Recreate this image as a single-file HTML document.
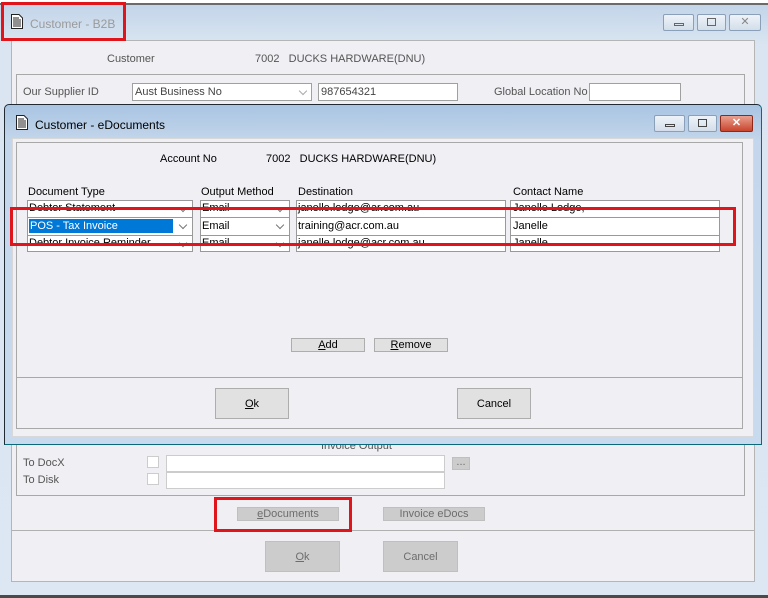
<!DOCTYPE html>
<html><head><style>
*{margin:0;padding:0;box-sizing:border-box}
body{width:768px;height:598px;overflow:hidden;background:#fff;font-family:"Liberation Sans",sans-serif;font-size:11px;color:#000;position:relative}
.a{position:absolute}
.t{position:absolute;white-space:nowrap;font-size:11px}
.box{position:absolute;border:1px solid #a0a0a0;background:#fff}
.grp{position:absolute;border:1px solid #a8a8a8}
.btn{position:absolute;border:1px solid #adadad;background:#e1e1e1;text-align:center;font-size:11px}
.dis{background:#cccccc;border-color:#bfbfbf;color:#6d6d6d}
.red{position:absolute;border:3px solid #e0141b}
.chev{position:absolute;width:6px;height:6px;border-right:1px solid #777;border-bottom:1px solid #777;transform:rotate(45deg)}
.wb{position:absolute;height:17px;border:1px solid #8aa0b8;border-radius:2px;background:linear-gradient(#eef3f9,#d3deea)}
</style></head><body>
<div class="a" style="left:0;top:3px;width:768px;height:595px;background:linear-gradient(#c3d5e9 0,#dae5f1 40px,#dce7f3 100%);border-top:2px solid #6b6b6b"></div>
<div class="a" style="left:0;top:595px;width:768px;height:3px;background:#4a4a4a"></div>
<svg class="a" style="left:11px;top:14px" width="12" height="15" viewBox="0 0 12 15"><path d="M0.5 0.5H8L11.5 4V14.5H0.5Z" fill="#fff" stroke="#222"/><path d="M2 4H8M2 6H10M2 8H10M2 10H10M2 12H10" stroke="#222"/></svg>
<div class="t" style="left:30px;top:17px;font-size:12px;color:#9a9a9a">Customer - B2B</div>
<div class="wb" style="left:663px;top:14px;width:31px"><div class="a" style="left:10px;top:8px;width:10px;height:3px;border:1px solid #666"></div></div>
<div class="wb" style="left:697px;top:14px;width:29px"><div class="a" style="left:9px;top:3px;width:9px;height:8px;border:1px solid #666"></div></div>
<div class="wb" style="left:729px;top:14px;width:32px;color:#888;text-align:center;font-size:11px;line-height:15px">✕</div>
<div class="a" style="left:11px;top:40px;width:744px;height:542px;background:#efeff4;border:1px solid #b5b5b5"></div>
<div class="t" style="left:107px;top:53px;color:#555">Customer</div>
<div class="t" style="left:255px;top:53px;color:#555">7002&nbsp;&nbsp;&nbsp;DUCKS HARDWARE(DNU)</div>
<div class="grp" style="left:16px;top:74px;width:729px;height:60px"></div>
<div class="t" style="left:23px;top:86px;color:#555">Our Supplier ID</div>
<div class="box" style="left:132px;top:83px;width:180px;height:18px"></div>
<div class="t" style="left:135px;top:86px;color:#444">Aust Business No</div>
<div class="chev" style="left:300px;top:88px;border-color:#aaa"></div>
<div class="box" style="left:318px;top:83px;width:140px;height:18px"></div>
<div class="t" style="left:321px;top:86px;color:#444">987654321</div>
<div class="t" style="left:494px;top:86px;color:#555">Global Location No</div>
<div class="box" style="left:589px;top:83px;width:92px;height:18px"></div>
<div class="grp" style="left:16px;top:440px;width:729px;height:56px"></div>
<div class="t" style="left:321px;top:440px;color:#555">Invoice Output</div>
<div class="t" style="left:23px;top:457px;color:#555">To DocX</div>
<div class="t" style="left:23px;top:474px;color:#555">To Disk</div>
<div class="box" style="left:147px;top:456px;width:12px;height:12px;border-color:#ccc"></div>
<div class="box" style="left:147px;top:473px;width:12px;height:12px;border-color:#ccc"></div>
<div class="box" style="left:166px;top:455px;width:279px;height:17px;border-color:#ccc"></div>
<div class="box" style="left:166px;top:472px;width:279px;height:17px;border-color:#ccc"></div>
<div class="btn dis" style="left:452px;top:457px;width:18px;height:13px;line-height:9px">...</div>
<div class="btn dis" style="left:237px;top:507px;width:102px;height:14px;line-height:13px"><u>e</u>Documents</div>
<div class="btn dis" style="left:383px;top:507px;width:102px;height:14px;line-height:13px">Invoice eDocs</div>
<div class="a" style="left:12px;top:530px;width:742px;height:1px;background:#b0b0b0"></div>
<div class="btn dis" style="left:265px;top:541px;width:75px;height:31px;line-height:30px"><u>O</u>k</div>
<div class="btn dis" style="left:383px;top:541px;width:75px;height:31px;line-height:30px">Cancel</div>
<div class="a" style="left:4px;top:104px;width:758px;height:341px;background:linear-gradient(#a9c4e2 0,#c3d6eb 36px,#c8daee 100%);border:1px solid #1f2a33;border-radius:5px 5px 0 0;border-right-color:#0b6a7a;border-bottom-color:#0b6a7a"></div>
<svg class="a" style="left:16px;top:115px" width="12" height="15" viewBox="0 0 12 15"><path d="M0.5 0.5H8L11.5 4V14.5H0.5Z" fill="#fff" stroke="#222"/><path d="M2 4H8M2 6H10M2 8H10M2 10H10M2 12H10" stroke="#222"/></svg>
<div class="t" style="left:35px;top:118px;font-size:12px">Customer - eDocuments</div>
<div class="wb" style="left:654px;top:115px;width:31px"><div class="a" style="left:10px;top:8px;width:10px;height:3px;border:1px solid #444"></div></div>
<div class="wb" style="left:688px;top:115px;width:29px"><div class="a" style="left:9px;top:3px;width:9px;height:8px;border:1px solid #444"></div></div>
<div class="a" style="left:720px;top:115px;width:33px;height:17px;border:1px solid #8b2a1a;border-radius:2px;background:linear-gradient(#e9a090,#c9452c);color:#fff;text-align:center;font-weight:bold;line-height:15px">✕</div>
<div class="a" style="left:12px;top:138px;width:742px;height:299px;background:#efeff4;border:1px solid #d8d8d8"></div>
<div class="grp" style="left:16px;top:142px;width:727px;height:236px"></div>
<div class="grp" style="left:16px;top:377px;width:727px;height:52px"></div>
<div class="t" style="left:160px;top:153px">Account No</div>
<div class="t" style="left:266px;top:153px">7002&nbsp;&nbsp;&nbsp;DUCKS HARDWARE(DNU)</div>
<div class="t" style="left:28px;top:186px">Document Type</div>
<div class="t" style="left:201px;top:186px">Output Method</div>
<div class="t" style="left:298px;top:186px">Destination</div>
<div class="t" style="left:513px;top:186px">Contact Name</div>
<div class="box" style="left:27px;top:200px;width:166px;height:52px;border-color:#999"></div>
<div class="a" style="left:27px;top:217px;width:166px;height:1px;background:#999"></div>
<div class="a" style="left:27px;top:235px;width:166px;height:1px;background:#999"></div>
<div class="box" style="left:200px;top:200px;width:90px;height:52px;border-color:#999"></div>
<div class="a" style="left:200px;top:217px;width:90px;height:1px;background:#999"></div>
<div class="a" style="left:200px;top:235px;width:90px;height:1px;background:#999"></div>
<div class="box" style="left:296px;top:200px;width:210px;height:52px;border-color:#999"></div>
<div class="a" style="left:296px;top:217px;width:210px;height:1px;background:#999"></div>
<div class="a" style="left:296px;top:235px;width:210px;height:1px;background:#999"></div>
<div class="box" style="left:510px;top:200px;width:210px;height:52px;border-color:#999"></div>
<div class="a" style="left:510px;top:217px;width:210px;height:1px;background:#999"></div>
<div class="a" style="left:510px;top:235px;width:210px;height:1px;background:#999"></div>
<div class="t" style="left:29px;top:202px">Debtor Statement</div>
<div class="a" style="left:29px;top:219px;width:144px;height:14px;background:#0078d7"></div>
<div class="t" style="left:30px;top:220px;color:#fff">POS - Tax Invoice</div>
<div class="t" style="left:29px;top:237px">Debtor Invoice Reminder</div>
<div class="t" style="left:202px;top:202px">Email</div>
<div class="t" style="left:202px;top:220px">Email</div>
<div class="t" style="left:202px;top:237px">Email</div>
<div class="t" style="left:298px;top:202px">janelle.lodge@ar.com.au</div>
<div class="t" style="left:298px;top:220px">training@acr.com.au</div>
<div class="t" style="left:298px;top:237px">janelle.lodge@acr.com.au</div>
<div class="t" style="left:513px;top:202px">Janelle Lodge,</div>
<div class="t" style="left:513px;top:220px">Janelle</div>
<div class="t" style="left:513px;top:237px">Janelle</div>
<div class="chev" style="left:180px;top:205px"></div><div class="chev" style="left:180px;top:222px"></div><div class="chev" style="left:180px;top:240px"></div>
<div class="chev" style="left:277px;top:205px"></div><div class="chev" style="left:277px;top:222px"></div><div class="chev" style="left:277px;top:240px"></div>
<div class="btn" style="left:291px;top:338px;width:74px;height:14px;line-height:13px"><u>A</u>dd</div>
<div class="btn" style="left:374px;top:338px;width:74px;height:14px;line-height:13px"><u>R</u>emove</div>
<div class="btn" style="left:215px;top:388px;width:74px;height:31px;line-height:30px"><u>O</u>k</div>
<div class="btn" style="left:457px;top:388px;width:74px;height:31px;line-height:30px">Cancel</div>
<div class="red" style="left:1px;top:2px;width:125px;height:39px"></div>
<div class="red" style="left:10px;top:207px;width:726px;height:39px"></div>
<div class="red" style="left:214px;top:497px;width:138px;height:35px"></div>
</body></html>
